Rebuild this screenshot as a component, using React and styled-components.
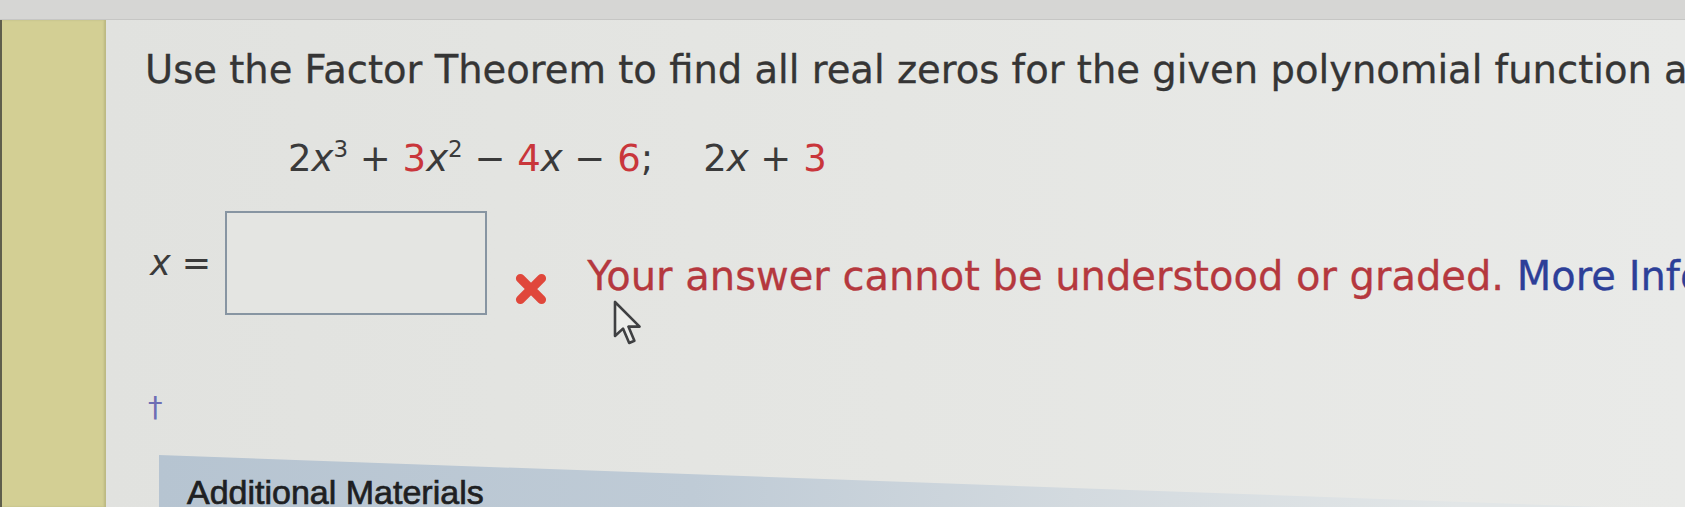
import React from "react";
import styled, { createGlobalStyle } from "styled-components";

const GlobalStyle = createGlobalStyle`
  html, body {
    margin: 0;
    padding: 0;
    background: #d6d6d4;
  }
`;

const Page = styled.div`
  width: 1685px;
  height: 507px;
  overflow: hidden;
  display: flex;
  flex-direction: column;
  background: #d6d6d4;
`;

const TopBand = styled.div`
  height: 19px;
  flex-shrink: 0;
  border-bottom: 1px solid #c6c6c4;
`;

const Body = styled.div`
  flex: 1;
  display: flex;
  min-height: 0;
`;

const Sidebar = styled.div`
  width: 104px;
  flex-shrink: 0;
  background: #d3cf94;
  border-left: 2px solid #5f5e4c;
  box-shadow: inset -2px 0 2px rgba(120, 118, 80, 0.25);
`;

const Main = styled.div`
  flex: 1;
  min-width: 0;
  padding: 28px 0 0 39px;
  background: linear-gradient(90deg, #e1e2df 0%, #e5e6e3 50%, #e9eae8 100%);
  white-space: nowrap;
  overflow: hidden;
  font-family: "DejaVu Sans", Verdana, sans-serif;
  color: #353535;
`;

const Heading = styled.div`
  font-size: 38.5px;
  line-height: 44px;
  -webkit-text-stroke: 0.3px #353535;
`;

const Poly = styled.div`
  margin: 45px 0 0 143px;
  font-size: 37px;
  line-height: 44px;
  color: #3a3a3a;
`;

const Coef = styled.span`
  color: #c9363b;
`;

const Var = styled.i`
  font-style: italic;
`;

const Sup = styled.sup`
  font-size: 0.62em;
  line-height: 0;
  vertical-align: 0.6em;
`;

const Gap = styled.span`
  display: inline-block;
  width: ${(p) => p.w}px;
`;

const AnswerRow = styled.div`
  position: relative;
  margin-top: 30px;
  height: 104px;
  display: flex;
  align-items: center;
  & > * {
    flex-shrink: 0;
  }
`;

const VarLabel = styled.span`
  margin-left: 5px;
  font-size: 35px;
  color: #3a3a3a;
`;

const AnswerBox = styled.div`
  margin-left: 14px;
  width: 258px;
  height: 100px;
  border: 2px solid #8795a2;
  background: #e4e5e2;
`;

const WrongMark = styled.svg`
  align-self: flex-end;
  margin: 0 0 8px 26px;
  width: 36px;
  height: 36px;
`;

const ErrorMsg = styled.span`
  align-self: flex-start;
  margin: 42px 0 0 38px;
  font-size: 40px;
  line-height: 46px;
  color: #b5383e;
  -webkit-text-stroke: 0.3px #b5383e;
`;

const MoreInfo = styled.span`
  color: #2d3f98;
  -webkit-text-stroke: 0.3px #2d3f98;
`;

const Cursor = styled.svg`
  position: absolute;
  left: 467px;
  top: 88px;
  width: 34px;
  height: 48px;
`;

const Dagger = styled.div`
  margin: 75px 0 0 3px;
  font-size: 29px;
  line-height: 34px;
  color: #6d6eb4;
`;

const Materials = styled.div`
  margin: 31px 0 0 14px;
  height: 60px;
  padding: 17px 0 0 28px;
  background: linear-gradient(90deg, #b6c4d1 0%, #bfcbd6 35%, #d3dadf 60%, #e2e6e7 85%);
  clip-path: polygon(0 0, 100% 55px, 100% 100%, 0 100%);
`;

const MaterialsTitle = styled.div`
  font-family: "Liberation Sans", Arial, sans-serif;
  font-size: 34px;
  line-height: 40px;
  color: #1e1f22;
  -webkit-text-stroke: 0.7px #1e1f22;
`;

export default function App() {
  return (
    <Page>
      <GlobalStyle />
      <TopBand />
      <Body>
        <Sidebar />
        <Main>
          <Heading>
            Use the Factor Theorem to find all real zeros for the given polynomial function and factor
          </Heading>
          <Poly>
            2<Var>x</Var>
            <Sup>3</Sup> + <Coef>3</Coef>
            <Var>x</Var>
            <Sup>2</Sup> − <Coef>4</Coef>
            <Var>x</Var> − <Coef>6</Coef>;<Gap w={50} />2<Var>x</Var> + <Coef>3</Coef>
          </Poly>
          <AnswerRow>
            <VarLabel>
              <Var>x</Var> =
            </VarLabel>
            <AnswerBox />
            <WrongMark viewBox="0 0 34 34">
              <path
                d="M7 7 L27 27 M27 7 L7 27"
                stroke="#e0473b"
                strokeWidth="8.5"
                strokeLinecap="round"
                fill="none"
              />
            </WrongMark>
            <ErrorMsg>
              Your answer cannot be understood or graded. <MoreInfo>More Information</MoreInfo>
            </ErrorMsg>
            <Cursor viewBox="0 0 17 24">
              <path
                d="M1.5 1.5 L1.5 18.5 L5.5 14.8 L8.6 22 L11.2 20.9 L8.2 13.8 L13.8 13.8 Z"
                fill="#ecedea"
                stroke="#3f4042"
                strokeWidth="1.3"
                strokeLinejoin="round"
              />
            </Cursor>
          </AnswerRow>
          <Dagger>†</Dagger>
          <Materials>
            <MaterialsTitle>Additional Materials</MaterialsTitle>
          </Materials>
        </Main>
      </Body>
    </Page>
  );
}
